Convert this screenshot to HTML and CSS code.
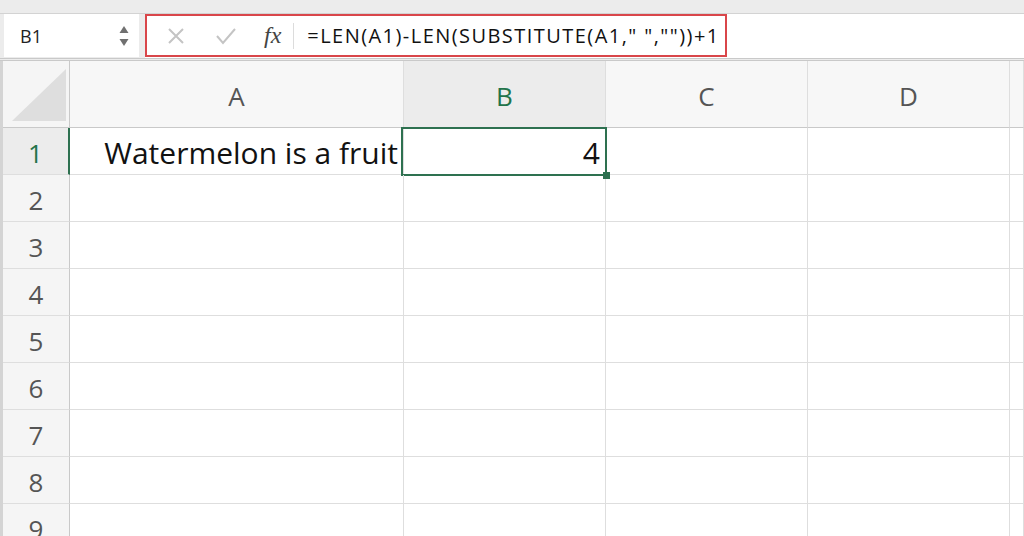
FILE: index.html
```html
<!DOCTYPE html>
<html lang="en">
<head>
  <meta charset="UTF-8">
  <title>Word count formula</title>
  <link rel="stylesheet" href="styles.css">
</head>
<body>

  <!-- Formula bar -->
  <div class="topstrip"></div>
  <div class="formula-bar">
    <div class="name-box">
      <span class="cell-ref">B1</span>
      <span class="spinner">
        <svg width="10" height="24" viewBox="0 0 10 24">
          <path d="M5 2 L9.5 9 L0.5 9 Z" fill="#707070"/>
          <path d="M5 22 L9.5 15 L0.5 15 Z" fill="#707070"/>
        </svg>
      </span>
    </div>
    <div class="formula-input">
      <div class="highlight">
        <span class="fb-icon">
          <svg width="18" height="18" viewBox="0 0 18 18">
            <path d="M2 2 L16 16 M16 2 L2 16" stroke="#c4c4c4" stroke-width="2" fill="none"/>
          </svg>
        </span>
        <span class="fb-icon">
          <svg width="22" height="18" viewBox="0 0 22 18">
            <path d="M2 9 L8 16 L20 2" stroke="#c4c4c4" stroke-width="2" fill="none"/>
          </svg>
        </span>
        <span class="fx">fx</span>
        <span class="fb-sep"></span>
        <span class="formula">=LEN(A1)-LEN(SUBSTITUTE(A1," ",""))+1</span>
      </div>
    </div>
  </div>

  <!-- Sheet -->
  <div class="sheet">
    <div class="corner">
      <svg width="56" height="54" viewBox="0 0 56 54"><path d="M0 52 L54 0 L54 52 Z" fill="#dedede"/></svg>
    </div>
    <div class="col-head">A</div>
    <div class="col-head active">B</div>
    <div class="col-head">C</div>
    <div class="col-head">D</div>
    <div class="col-head"></div>
  </div>

  <div class="grid" id="grid"></div>

  <script>
    const grid = document.getElementById("grid");
    for (let r = 1; r <= 9; r++) {
      let row = `<div class="row-head${r === 1 ? ' active' : ''}">${r}</div>`;
      for (let c = 0; c < 5; c++) {
        let text = '';
        let cls = 'cell';
        if (r === 1 && c === 0) text = 'Watermelon is a fruit';
        if (r === 1 && c === 1) { text = '4'; cls += ' selected'; }
        row += `<div class="${cls}">${text}</div>`;
      }
      grid.innerHTML += row;
    }
  </script>

</body>
</html>
```

FILE: styles.css
```css
body {
  margin: 0;
  padding: 0;
  background: #fff;
  font-family: 'Open Sans', 'Liberation Sans', sans-serif;
  color: #111;
  overflow: hidden;
}
.topstrip {
  height: 13px;
  background: #ececec;
  border-bottom: 1px solid #d3d3d3;
}
.formula-bar {
  display: flex;
  height: 44px;
  background: #ececec;
  border-bottom: 3px double #c9c9c9;
  padding-left: 4px;
}
.name-box {
  width: 135px;
  background: #fff;
  display: flex;
  align-items: center;
  justify-content: space-between;
  padding: 0 10px 0 16px;
  box-sizing: border-box;
  margin-bottom: 1px;
}
.cell-ref {
  font-size: 18px;
  color: #222;
}
.spinner {
  display: flex;
}
.formula-input {
  flex: 1;
  margin-left: 6px;
  background: #fff;
}
.highlight {
  width: 582px;
  height: 43px;
  box-sizing: border-box;
  border: 2px solid #d9464a;
  display: flex;
  align-items: center;
  padding-left: 20px;
}
.fb-icon {
  display: flex;
  margin-right: 30px;
}
.fx {
  font-family: 'Liberation Serif', serif;
  font-style: italic;
  font-size: 24px;
  color: #444;
  margin-left: -3px;
}
.fb-sep {
  width: 1px;
  height: 26px;
  background: #dcdcdc;
  margin: 0 13px 0 12px;
}
.formula {
  font-size: 20px;
  color: #111;
  letter-spacing: 1.45px;
  white-space: nowrap;
}
.sheet,
.grid {
  display: grid;
  grid-template-columns: 67px 334px 202px 202px 202px 14px;
  border-left: 3px solid #d4d4d4;
}
.sheet {
  grid-template-rows: 67px;
}
.grid {
  grid-auto-rows: 47px;
}
.corner {
  background: #f5f5f5;
  border-right: 1px solid #c9c9c9;
  border-bottom: 1px solid #c9c9c9;
  display: flex;
  align-items: flex-end;
  padding: 0 0 4px 9px;
}
.col-head {
  background: #f7f7f7;
  border-right: 1px solid #dedede;
  border-bottom: 1px solid #c9c9c9;
  display: flex;
  align-items: center;
  justify-content: center;
  padding-top: 3px;
  font-size: 26px;
  color: #555;
}
.col-head.active {
  background: #ececec;
  color: #22744a;
}
.row-head {
  background: #f5f5f5;
  border-right: 1px solid #c9c9c9;
  border-bottom: 1px solid #dedede;
  display: flex;
  align-items: center;
  justify-content: center;
  padding-top: 4px;
  font-size: 26px;
  color: #555;
}
.row-head.active {
  background: #ececec;
  color: #22744a;
  border-right: 2px solid #2e7150;
}
.cell {
  border-right: 1px solid #dedede;
  border-bottom: 1px solid #dedede;
  display: flex;
  align-items: center;
  justify-content: flex-end;
  padding-right: 5px;
  padding-top: 2px;
  font-size: 30px;
  white-space: nowrap;
  position: relative;
}
.cell.selected::after {
  content: '';
  position: absolute;
  top: -1px;
  left: -3px;
  right: -2px;
  bottom: -2px;
  border: 2px solid #2e7150;
}
.cell.selected::before {
  content: '';
  position: absolute;
  right: -5px;
  bottom: -5px;
  width: 7px;
  height: 7px;
  background: #2e7150;
  z-index: 1;
}
```
